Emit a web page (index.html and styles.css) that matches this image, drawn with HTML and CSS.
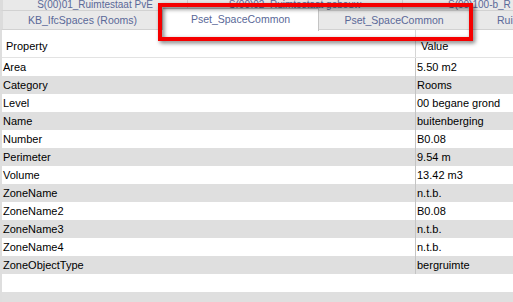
FILE: index.html
```html
<!DOCTYPE html>
<html lang="en">
<head>
    <meta charset="UTF-8">
    <meta name="viewport" content="width=device-width, initial-scale=1.0">
    <title>Pset_SpaceCommon</title>
    <link rel="stylesheet" href="styles.css">
</head>
<body>
    <!-- top row of sheet tabs, partly scrolled off -->
    <div class="tabrow tabrow-top">
        <div class="tab tab-a">S(00)01_Ruimtestaat PvE</div>
        <div class="tab tab-b">S(00)02_Ruimtestaat gebouw</div>
        <div class="tab tab-c">S(00)100-b_R</div>
    </div>

    <div class="tabrow tabrow-main">
        <div class="tab tab-kb">KB_IfcSpaces (Rooms)</div>
        <div class="tab tab-active">Pset_SpaceCommon</div>
        <div class="tab tab-pset">Pset_SpaceCommon</div>
        <div class="tab tab-rui">Rui</div>
    </div>

    <div class="grid">
        <div class="grid-head">
            <div class="col-prop">Property</div>
            <div class="col-val">Value</div>
        </div>
        <div class="rows">
            <div class="row"><div class="col-prop">Area</div><div class="col-val">5.50 m2</div></div>
            <div class="row"><div class="col-prop">Category</div><div class="col-val">Rooms</div></div>
            <div class="row"><div class="col-prop">Level</div><div class="col-val">00 begane grond</div></div>
            <div class="row"><div class="col-prop">Name</div><div class="col-val">buitenberging</div></div>
            <div class="row"><div class="col-prop">Number</div><div class="col-val">B0.08</div></div>
            <div class="row"><div class="col-prop">Perimeter</div><div class="col-val">9.54 m</div></div>
            <div class="row"><div class="col-prop">Volume</div><div class="col-val">13.42 m3</div></div>
            <div class="row"><div class="col-prop">ZoneName</div><div class="col-val">n.t.b.</div></div>
            <div class="row"><div class="col-prop">ZoneName2</div><div class="col-val">B0.08</div></div>
            <div class="row"><div class="col-prop">ZoneName3</div><div class="col-val">n.t.b.</div></div>
            <div class="row"><div class="col-prop">ZoneName4</div><div class="col-val">n.t.b.</div></div>
            <div class="row"><div class="col-prop">ZoneObjectType</div><div class="col-val">bergruimte</div></div>
            <div class="row empty"></div>
            <div class="row empty"></div>
        </div>
    </div>

    <!-- annotation drawn over the tabs -->
    <div class="callout"></div>
</body>
</html>
```

FILE: styles.css
```css
body {
    margin: 0;
    width: 513px;
    height: 302px;
    overflow: hidden;
    position: relative;
    background: #fff;
    font-family: "Liberation Sans", Arial, sans-serif;
    font-size: 11px;
    color: #000;
}

.tabrow {
    display: flex;
    background: #e9e9e9;
    border-left: 3px solid #dcdcdc;
    white-space: nowrap;
}

.tab {
    flex: none;
    box-sizing: border-box;
    border-right: 1px solid #cfcfcf;
    text-align: center;
    color: #5a6898;
    overflow: hidden;
}

.tabrow-top {
    height: 10px;
    border-bottom: 1px solid #d2d2d2;
    overflow: hidden;
}
.tabrow-top .tab {
    font-size: 10px;
    line-height: 9px;
    height: 10px;
}
.tab-a { width: 185px; }
.tab-b { width: 215px; }
.tab-c {
    text-align: left;
    padding-left: 45px;
    border-right: none;
}

.tabrow-main {
    height: 18px;
    border-bottom: 1px solid #d2d2d2;
}
.tabrow-main .tab {
    font-size: 10.5px;
    line-height: 19px;
    height: 18px;
}
.tab-kb { width: 160px; }
.tab-active {
    position: relative;
    z-index: 1;
    width: 156px;
    margin-top: -3px;
    background: #fff;
    border: 1px solid #c4c4c4;
    border-bottom: none;
    border-left: none;
}
.tabrow-main .tab-active {
    height: 23px;
    line-height: 20px;
}
.tab-pset { width: 151px; }
.tab-rui {
    text-align: left;
    padding-left: 27px;
    border-right: none;
}

.grid {
    border-left: 2px solid #dedede;
}

.grid-head {
    display: flex;
    height: 28px;
    box-sizing: border-box;
    border-bottom: 1px solid #e3e3e3;
    line-height: 20px;
}
.grid-head .col-prop {
    padding-top: 6px;
    padding-left: 4px;
}
.grid-head .col-val {
    padding-top: 6px;
    padding-left: 5px;
    border-left-color: #d6d6d6;
}

.col-prop {
    width: 413px;
    box-sizing: border-box;
    padding-left: 1px;
    white-space: nowrap;
}
.col-val {
    flex: 1;
    padding-left: 1px;
    border-left: 1px solid #c4c4c4;
    white-space: nowrap;
}

.row {
    display: flex;
    height: 18px;
    line-height: 18px;
}
.row:nth-child(even) {
    background: #dfdfdf;
}

.callout {
    position: absolute;
    z-index: 5;
    left: 158px;
    top: 3px;
    width: 315px;
    height: 38px;
    box-sizing: border-box;
    border: 4px solid #f50000;
    filter: drop-shadow(2px 2px 2px rgba(0, 0, 0, 0.55));
}
```
